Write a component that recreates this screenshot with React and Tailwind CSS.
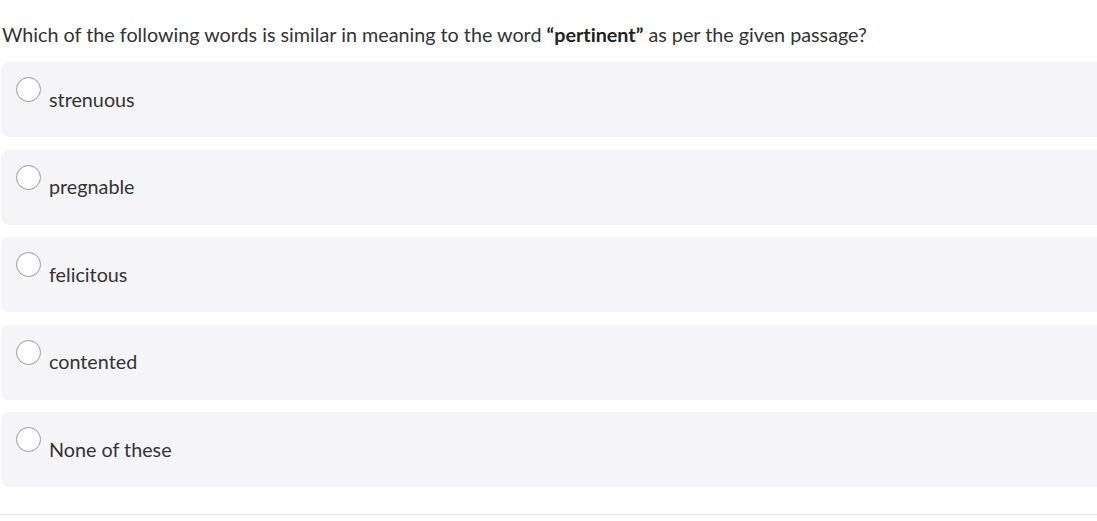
import React from 'react';

const options = ['strenuous', 'pregnable', 'felicitous', 'contented', 'None of these'];

const Option = ({ label }) => (
  <div className="flex h-[75px] w-[1110px] shrink-0 items-start rounded-lg bg-[#f5f5f7] pl-[15px] pt-[15px]">
    <span className="block h-[25px] w-[25px] shrink-0 rounded-full border border-[#9a9a9a] bg-white" />
    <span className="ml-[8px] mt-[10.5px] text-[19.75px] leading-[1.2] text-[#333]">{label}</span>
  </div>
);

export default function App() {
  return (
    <div
      className="h-[521px] w-[1097px] overflow-hidden bg-white [font-variant-ligatures:none]"
      style={{ fontFamily: 'Lato, "Open Sans", sans-serif' }}
    >
      <div className="flex h-[515px] flex-col border-b border-[#e6e6e6]">
        <p className="ml-[2px] mt-[23px] text-[19.75px] leading-[24px] text-[#333]">
          Which of the following words is similar in meaning to the word{' '}
          <span className="font-bold text-[#222]">“pertinent”</span> as per the given passage?
        </p>
        <div className="ml-[1px] mt-[15px] flex flex-col gap-[12.5px]">
          {options.map((o) => (
            <Option key={o} label={o} />
          ))}
        </div>
      </div>
    </div>
  );
}
